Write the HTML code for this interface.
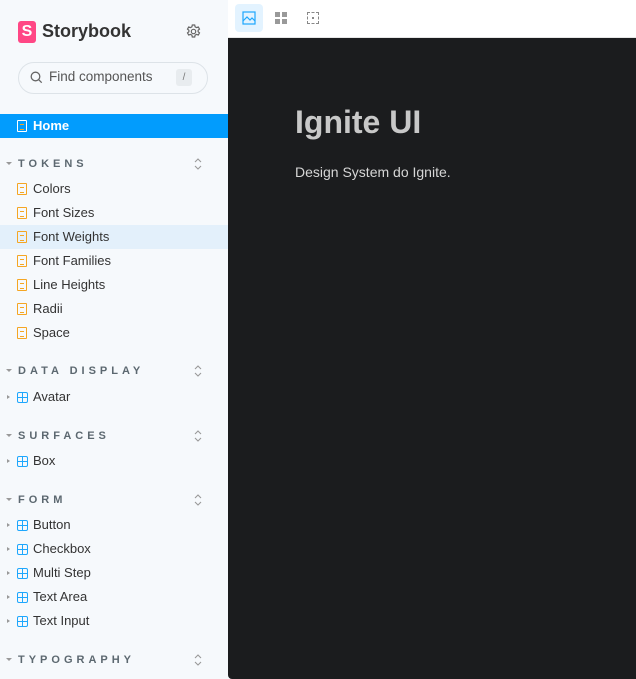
<!DOCTYPE html><html><head><style>
*{margin:0;padding:0;box-sizing:border-box}
body{width:636px;height:679px;overflow:hidden;background:#f6f9fc;font-family:"Liberation Sans",sans-serif;position:relative;color:#333}
.a{position:absolute}
.item{position:absolute;left:0;width:228px;height:24px;font-size:13px;color:#333;line-height:24px;padding-left:33px}
.doc{position:absolute;left:17px;top:6px;width:10px;height:12px;border:1.3px solid #f5a623;border-radius:1px}
.doc::after{content:"";position:absolute;left:2px;top:3px;width:4px;height:4px;border-top:1px solid #f5a623;border-bottom:1px solid #f5a623}
.comp{position:absolute;left:17px;top:7px;width:11px;height:11px;border:1.3px solid #1ea7fd;border-radius:2px;background:linear-gradient(#1ea7fd,#1ea7fd) center/1px 100% no-repeat,linear-gradient(#1ea7fd,#1ea7fd) center/100% 1px no-repeat}
.tri{position:absolute;left:7px;top:10px;border-left:3px solid #999;border-top:2.5px solid transparent;border-bottom:2.5px solid transparent}
.hdr{position:absolute;left:0;width:228px;height:20px;font-size:11px;font-weight:bold;letter-spacing:4px;color:#5c6870;line-height:20px;padding-left:18px}
.hdr::before{content:"";position:absolute;left:6px;top:8px;border-top:3px solid #999;border-left:3px solid transparent;border-right:3px solid transparent}
.hdr svg{position:absolute;left:193px;top:3px}
</style></head><body>
<div class="a" style="left:18px;top:21px;width:18px;height:22px;background:#ff4785;border-radius:3px;color:#fff;font-weight:bold;font-size:16px;text-align:center;line-height:22px">S</div>
<div class="a" style="left:42px;top:21px;font-size:18px;font-weight:bold;color:#333">Storybook</div>
<svg class="a" style="left:186px;top:24px" width="15" height="15" viewBox="0 0 15 15" fill="none" stroke="#666" stroke-width="1.2"><path d="M6.3 1h2.4l.4 1.8 1.4.8 1.8-.6 1.2 2.1-1.4 1.2v1.4l1.4 1.2-1.2 2.1-1.8-.6-1.4.8-.4 1.8H6.3l-.4-1.8-1.4-.8-1.8.6-1.2-2.1 1.4-1.2V6.3L1.5 5.1l1.2-2.1 1.8.6 1.4-.8z"/><circle cx="7.5" cy="7.5" r="2.2"/></svg>
<div class="a" style="left:18px;top:62px;width:190px;height:32px;border:1px solid #dde3e8;border-radius:16px;background:#f6f9fc"></div>
<svg class="a" style="left:30px;top:71px" width="13" height="13" viewBox="0 0 13 13" fill="none" stroke="#666" stroke-width="1.3"><circle cx="5.5" cy="5.5" r="4.3"/><path d="M8.7 8.7l3 3"/></svg>
<div class="a" style="left:49px;top:69px;font-size:13.5px;color:#555">Find components</div>
<div class="a" style="left:176px;top:69px;width:16px;height:17px;background:#e8ecef;border-radius:3px;font-size:10px;color:#777;text-align:center;line-height:17px">/</div>
<div class="item" style="top:114px;background:#029cfd;color:#fff;font-weight:bold"><span class="doc" style="border-color:#fff"></span>Home</div>
<div class="hdr" style="top:154px">TOKENS<svg width="10" height="14" viewBox="0 0 10 14" fill="none" stroke="#999" stroke-width="1.1"><path d="M2 5l3-3 3 3M2 9l3 3 3-3"/></svg></div>
<div class="item" style="top:177px"><span class="doc"></span>Colors</div>
<div class="item" style="top:201px"><span class="doc"></span>Font Sizes</div>
<div class="item" style="top:225px;background:#e3f0fb"><span class="doc"></span>Font Weights</div>
<div class="item" style="top:249px"><span class="doc"></span>Font Families</div>
<div class="item" style="top:273px"><span class="doc"></span>Line Heights</div>
<div class="item" style="top:297px"><span class="doc"></span>Radii</div>
<div class="item" style="top:321px"><span class="doc"></span>Space</div>
<div class="hdr" style="top:361px">DATA DISPLAY<svg width="10" height="14" viewBox="0 0 10 14" fill="none" stroke="#999" stroke-width="1.1"><path d="M2 5l3-3 3 3M2 9l3 3 3-3"/></svg></div>
<div class="item" style="top:385px"><span class="tri"></span><span class="comp"></span>Avatar</div>
<div class="hdr" style="top:426px">SURFACES<svg width="10" height="14" viewBox="0 0 10 14" fill="none" stroke="#999" stroke-width="1.1"><path d="M2 5l3-3 3 3M2 9l3 3 3-3"/></svg></div>
<div class="item" style="top:449px"><span class="tri"></span><span class="comp"></span>Box</div>
<div class="hdr" style="top:490px">FORM<svg width="10" height="14" viewBox="0 0 10 14" fill="none" stroke="#999" stroke-width="1.1"><path d="M2 5l3-3 3 3M2 9l3 3 3-3"/></svg></div>
<div class="item" style="top:513px"><span class="tri"></span><span class="comp"></span>Button</div>
<div class="item" style="top:537px"><span class="tri"></span><span class="comp"></span>Checkbox</div>
<div class="item" style="top:561px"><span class="tri"></span><span class="comp"></span>Multi Step</div>
<div class="item" style="top:585px"><span class="tri"></span><span class="comp"></span>Text Area</div>
<div class="item" style="top:609px"><span class="tri"></span><span class="comp"></span>Text Input</div>
<div class="hdr" style="top:650px">TYPOGRAPHY<svg width="10" height="14" viewBox="0 0 10 14" fill="none" stroke="#999" stroke-width="1.1"><path d="M2 5l3-3 3 3M2 9l3 3 3-3"/></svg></div>
<div class="a" style="left:228px;top:0;width:408px;height:38px;background:#fff;border-bottom:1px solid #e6e6e6"></div>
<div class="a" style="left:235px;top:4px;width:28px;height:28px;background:#e3f3ff;border-radius:4px"></div>
<svg class="a" style="left:242px;top:11px" width="14" height="14" viewBox="0 0 14 14" fill="none" stroke="#1ea7fd" stroke-width="1.2"><rect x="1" y="1" width="12" height="12"/><path d="M1 10l4-4 3 3 2-2 3 3"/></svg>
<div class="a" style="left:275px;top:12px;width:12px;height:12px;background:linear-gradient(#fff,#fff) center/2px 100% no-repeat,linear-gradient(#fff,#fff) center/100% 2px no-repeat,#999"></div>
<div class="a" style="left:307px;top:12px;width:12px;height:12px;border:1.3px dashed #888"></div>
<div class="a" style="left:312px;top:17px;width:2px;height:2px;background:#888"></div>
<div class="a" style="left:228px;top:38px;width:408px;height:641px;background:#1b1c1e;border-bottom-left-radius:4px"></div>
<div class="a" style="left:295px;top:104px;font-size:32px;font-weight:bold;color:#c8c8c8">Ignite UI</div>
<div class="a" style="left:295px;top:164px;font-size:14px;color:#d6d6d6">Design System do Ignite.</div>
</body></html>
